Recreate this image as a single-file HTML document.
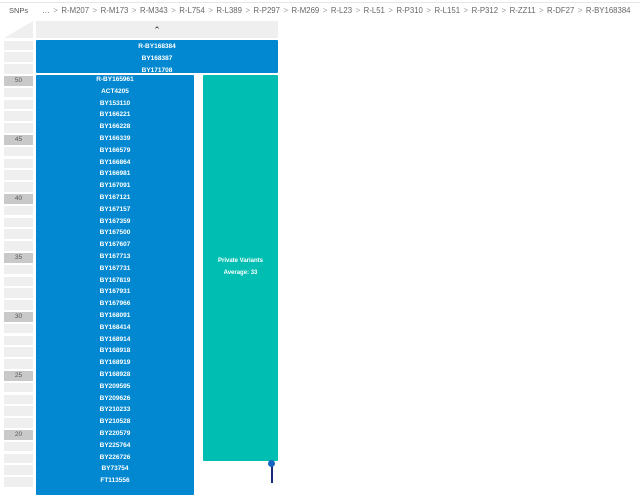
<!DOCTYPE html>
<html><head><meta charset="utf-8"><style>
*{margin:0;padding:0;box-sizing:border-box}
body{width:640px;height:482px;overflow:hidden;background:#fff;font-family:"Liberation Sans",Arial,sans-serif;position:relative}
.topline{position:absolute;left:0;top:2px;width:640px;height:1px;background:#e6e6e6}
.snps{position:absolute;left:9px;top:6px;font-size:7.5px;color:#555}
.crumb{position:absolute;left:42px;top:6px;font-size:7.8px;color:#666;white-space:nowrap}
.crumb span{color:#999;margin:0 3.5px}
.axis{position:absolute;left:4px;width:29px}
.axis div{height:11.8px;padding:1px 0}
.axis div i{display:block;height:9.6px;background:#efefef;font-style:normal;font-size:6.5px;color:#555;text-align:center;line-height:9.6px}
.axis div i.l{background:#c9c9c9}
.tri{position:absolute;left:4px;top:21px;width:29px;height:17px;background:linear-gradient(to bottom right,#fff 50%,#efefef 50%)}
.bar{position:absolute;left:36px;top:21px;width:242px;height:17px;background:#efefef;text-align:center;font-size:9px;line-height:19px;color:#333}
.blue{position:absolute;background:#0288d1;color:#fff;font-weight:bold;font-size:6.5px;text-align:center;border-radius:1px}
.blue div{height:11.8px;line-height:10px}
.teal{position:absolute;left:203px;top:75px;width:75px;height:386px;background:#00bfb2;border-radius:1px;color:#fff;font-weight:bold;font-size:6px;text-align:center}
</style></head><body>
<div class="topline"></div>
<div class="snps">SNPs</div>
<div class="crumb">…<span>&gt;</span>R-M207<span>&gt;</span>R-M173<span>&gt;</span>R-M343<span>&gt;</span>R-L754<span>&gt;</span>R-L389<span>&gt;</span>R-P297<span>&gt;</span>R-M269<span>&gt;</span>R-L23<span>&gt;</span>R-L51<span>&gt;</span>R-P310<span>&gt;</span>R-L151<span>&gt;</span>R-P312<span>&gt;</span>R-ZZ11<span>&gt;</span>R-DF27<span>&gt;</span>R-BY168384</div>
<div class="tri"></div>
<div class="bar">&#8963;</div>
<div class="axis" style="top:39.6px"><div><i></i></div><div><i></i></div><div><i></i></div></div>
<div class="axis" style="top:75px">
<div><i class="l">50</i></div><div><i></i></div><div><i></i></div><div><i></i></div><div><i></i></div>
<div><i class="l">45</i></div><div><i></i></div><div><i></i></div><div><i></i></div><div><i></i></div>
<div><i class="l">40</i></div><div><i></i></div><div><i></i></div><div><i></i></div><div><i></i></div>
<div><i class="l">35</i></div><div><i></i></div><div><i></i></div><div><i></i></div><div><i></i></div>
<div><i class="l">30</i></div><div><i></i></div><div><i></i></div><div><i></i></div><div><i></i></div>
<div><i class="l">25</i></div><div><i></i></div><div><i></i></div><div><i></i></div><div><i></i></div>
<div><i class="l">20</i></div><div><i></i></div><div><i></i></div><div><i></i></div><div><i></i></div>
</div>
<div class="blue" style="left:36px;top:40px;width:242px;height:33px;padding-top:2px">
<div>R-BY168384</div><div>BY168387</div><div>BY171708</div></div>
<div class="blue" style="left:36px;top:75px;width:158px;height:420px">
<div>R-BY165961</div><div>ACT4205</div><div>BY153110</div><div>BY166221</div><div>BY166228</div><div>BY166339</div><div>BY166579</div><div>BY166864</div><div>BY166981</div><div>BY167091</div><div>BY167121</div><div>BY167157</div><div>BY167359</div><div>BY167500</div><div>BY167607</div><div>BY167713</div><div>BY167731</div><div>BY167819</div><div>BY167931</div><div>BY167966</div><div>BY168091</div><div>BY168414</div><div>BY168914</div><div>BY168918</div><div>BY168919</div><div>BY168928</div><div>BY209595</div><div>BY209626</div><div>BY210233</div><div>BY210528</div><div>BY220579</div><div>BY225764</div><div>BY226726</div><div>BY73754</div><div>FT113556</div>
</div>
<div class="teal"><div style="position:absolute;top:183px;width:100%">Private Variants</div><div style="position:absolute;top:195px;width:100%">Average: 33</div></div>
<div style="position:absolute;left:270.5px;top:463px;width:2px;height:20px;background:#1a2a7a"></div>
<div style="position:absolute;left:268px;top:460px;width:7px;height:7px;border-radius:50%;background:#1565c0"></div>
</body></html>
